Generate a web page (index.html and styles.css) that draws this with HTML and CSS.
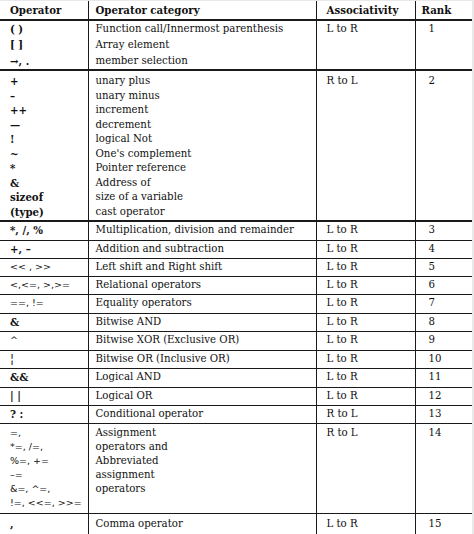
FILE: index.html
```html
<!DOCTYPE html>
<html>
<head>
<meta charset="utf-8">
<link rel="stylesheet" href="styles.css">
</head>
<body>
<table class="ops">
<colgroup>
<col class="c1"><col class="c2"><col class="c3"><col class="c4">
</colgroup>
<thead>
<tr class="head"><th class="op">Operator</th><th class="cat">Operator category</th><th class="assoc">Associativity</th><th class="rank">Rank</th></tr>
</thead>
<tbody>
<tr class="g1 thick">
<td class="op b">( )<br>[ ]<br>→, .</td>
<td class="cat">Function call/Innermost parenthesis<br>Array element<br>member selection</td>
<td class="assoc">L to R</td><td class="rank">1</td>
</tr>
<tr class="g2 thick">
<td class="op b">+<br>–<br>++<br>—<br>!<br>~<br>*<br>&amp;<br>sizeof<br>(type)</td>
<td class="cat">unary plus<br>unary minus<br>increment<br>decrement<br>logical Not<br>One's complement<br>Pointer reference<br>Address of<br>size of a variable<br>cast operator</td>
<td class="assoc">R to L</td><td class="rank">2</td>
</tr>
<tr class="s tall"><td class="op b">*, /, %</td><td class="cat">Multiplication, division and remainder</td><td class="assoc">L to R</td><td class="rank">3</td></tr>
<tr class="s"><td class="op b">+, –</td><td class="cat">Addition and subtraction</td><td class="assoc">L to R</td><td class="rank">4</td></tr>
<tr class="s"><td class="op sans">&lt;&lt; , &gt;&gt;</td><td class="cat">Left shift and Right shift</td><td class="assoc">L to R</td><td class="rank">5</td></tr>
<tr class="s"><td class="op sans">&lt;,&lt;=, &gt;,&gt;=</td><td class="cat">Relational operators</td><td class="assoc">L to R</td><td class="rank">6</td></tr>
<tr class="s tall"><td class="op sans">==, !=</td><td class="cat">Equality operators</td><td class="assoc">L to R</td><td class="rank">7</td></tr>
<tr class="s"><td class="op b">&amp;</td><td class="cat">Bitwise AND</td><td class="assoc">L to R</td><td class="rank">8</td></tr>
<tr class="s tall"><td class="op sans">^</td><td class="cat">Bitwise XOR (Exclusive OR)</td><td class="assoc">L to R</td><td class="rank">9</td></tr>
<tr class="s"><td class="op bar">¦</td><td class="cat">Bitwise OR (Inclusive OR)</td><td class="assoc">L to R</td><td class="rank">10</td></tr>
<tr class="s tall"><td class="op b">&amp;&amp;</td><td class="cat">Logical AND</td><td class="assoc">L to R</td><td class="rank">11</td></tr>
<tr class="s"><td class="op b">| |</td><td class="cat">Logical OR</td><td class="assoc">L to R</td><td class="rank">12</td></tr>
<tr class="s"><td class="op b">? :</td><td class="cat">Conditional operator</td><td class="assoc">R to L</td><td class="rank">13</td></tr>
<tr class="g3">
<td class="op sans">=,<br>*=, /=,<br>%=, +=<br>–=<br>&amp;=, ^=,<br>!=, &lt;&lt;=, &gt;&gt;=</td>
<td class="cat">Assignment<br>operators and<br>Abbreviated<br>assignment<br>operators</td>
<td class="assoc">R to L</td><td class="rank">14</td>
</tr>
<tr class="last"><td class="op b">,</td><td class="cat">Comma operator</td><td class="assoc">L to R</td><td class="rank">15</td></tr>
</tbody>
</table>
</body>
</html>
```
FILE: styles.css
```css
html, body {
  margin: 0;
  padding: 0;
  background: #e9e9e9;
}
body {
  padding-top: 1px;
  width: 474px;
  height: 534px;
  overflow: hidden;
  box-sizing: border-box;
}
.ops {
  border-collapse: collapse;
  table-layout: fixed;
  width: 472px;
  background: #fff;
  font-family: "DejaVu Serif", serif;
  font-size: 10.2px;
  color: #111;
}
.c1 { width: 88px; }
.c2 { width: 228px; }
.c3 { width: 99px; }
.c4 { width: 57px; }

.ops th, .ops td {
  text-align: left;
  vertical-align: top;
  border-left: 1px solid #1a1a1a;
  border-bottom: 1px solid #1a1a1a;
  padding: 0;
  white-space: nowrap;
}
.ops th:first-child, .ops td:first-child { border-left: none; }

.head th {
  font-weight: bold;
  height: 18px;
  line-height: 18px;
  border-bottom: 2px solid #1a1a1a;
}

.op { padding-left: 10px !important; }
.cat { padding-left: 7px !important; }
.assoc { padding-left: 10px !important; }
.rank { padding-left: 13px !important; }
.head .rank { padding-left: 6px !important; }

.b { font-weight: bold; }
.sans { font-family: "DejaVu Sans", sans-serif; font-size: 9.5px; }
.bar { font-family: "DejaVu Sans", sans-serif; font-size: 12px; }

.thick td { border-bottom: 2px solid #1a1a1a; }

.g1 td { height: 48px; line-height: 16px; padding-top: 0; }
.g2 td { height: 146px; line-height: 14.5px; padding-top: 3px; }
.s td { height: 16px; line-height: 14px; padding-top: 1px; }
.s.tall td { height: 17px; }
.g3 td { height: 87px; line-height: 14px; padding-top: 2px; }
.last td { height: 20px; line-height: 14px; padding-top: 3px; border-bottom: none; }
```
